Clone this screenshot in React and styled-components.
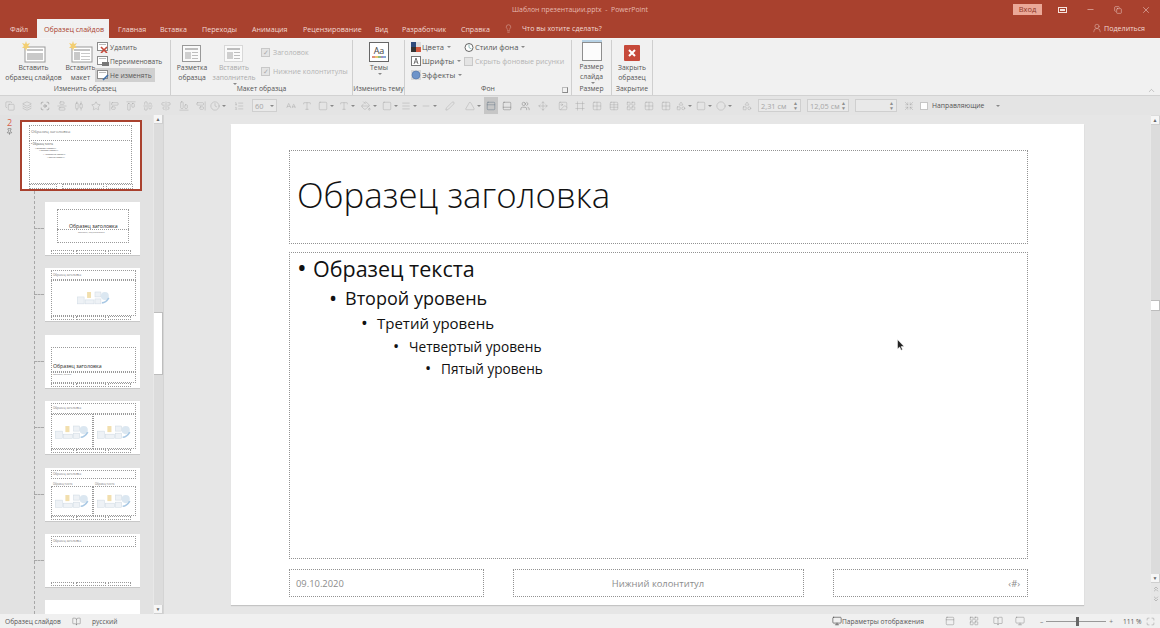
import React from 'react';
import styled, {createGlobalStyle} from 'styled-components';
import {
  Copy, Layers, Focus, AlignVerticalJustifyCenter, AlignHorizontalDistributeCenter, Star, AlignStartVertical,
  AlignStartHorizontal, AlignCenterHorizontal, AlignCenterVertical, AlignEndHorizontal, AlignEndVertical,
  Clock, ListOrdered, ALargeSmall, Type, PaintBucket, Square, Menu, Minus, Pen, Triangle, PanelTop,
  PanelBottom, Users, Move, Image, Frame, Grid2x2, Table, Shapes, Circle, Maximize, LayoutGrid,
  BookOpen, Monitor, Lightbulb, UserRound, Pin, ChevronUp, ChevronsUp, ChevronsDown, X, Shrink
} from 'lucide-react';

const RED = '#a9412e';

const Global = createGlobalStyle`
  html, body { margin: 0; padding: 0; background: #e6e6e6; }
  * { box-sizing: border-box; }
  body { font-family: "Open Sans", "Noto Sans", "Liberation Sans", sans-serif; }
`;

/* ---------- window ---------- */
const Window = styled.div`
  position: relative;
  width: 1160px;
  height: 628px;
  overflow: hidden;
  display: flex;
  flex-direction: column;
  font-size: 8px;
  color: #444;
`;
const TitleBar = styled.div`
  height: 19px;
  background: ${RED};
  display: grid;
  grid-template-columns: 1fr auto 1fr;
  align-items: center;
`;
const DocName = styled.div`
  grid-column: 2;
  color: #e6b9ae;
  font-size: 6.9px;
  white-space: pre;
`;
const WinControls = styled.div`
  grid-column: 3;
  display: flex;
  justify-content: flex-end;
  align-items: center;
`;
const SignIn = styled.div`
  width: 29px;
  height: 11px;
  margin-right: 6px;
  background: #eba898;
  color: #8d3526;
  font-size: 7.5px;
  line-height: 11px;
  text-align: center;
`;
const WinButton = styled.div`
  width: 28px;
  display: flex;
  justify-content: center;
  align-items: center;
  color: #f6e3de;
`;
const TabRow = styled.div`
  height: 19px;
  background: ${RED};
  display: flex;
  align-items: flex-end;
  padding-left: 10px;
  position: relative;
`;
const Tab = styled.div`
  height: 19px;
  line-height: 20px;
  white-space: nowrap;
  font-size: 7.1px;
  color: ${p => p.$active ? RED : '#f1d9d3'};
  background: ${p => p.$active ? '#f1f1f1' : 'transparent'};
  padding: 0 ${p => p.$active ? '7px' : '0'};
  width: ${p => p.$w}px;
  margin-right: ${p => p.$gap}px;
  flex: none;
`;
const TellMe = styled.div`
  display: flex;
  align-items: center;
  gap: 9px;
  height: 19px;
  color: #f1d9d3;
  font-size: 7px;
  white-space: nowrap;
`;
const Share = styled.div`
  position: absolute;
  right: 15px;
  top: 4px;
  display: flex;
  align-items: center;
  gap: 2px;
  color: #f1d9d3;
  font-size: 7.1px;
`;

/* ---------- ribbon ---------- */
const Ribbon = styled.div`
  height: 57px;
  background: #f1f1f1;
  display: flex;
  border-top: 1px solid #f4f4f4;
  position: relative;
`;
const Group = styled.div`
  width: ${p => p.$w}px;
  flex: none;
  display: flex;
  flex-direction: column;
  padding-bottom: 1px;
  margin-top: 1px;
  border-right: 1px solid #cfcfcf;
  position: relative;
`;
const GroupBody = styled.div`
  flex: 1;
  display: flex;
  min-height: 0;
`;
const GroupLabel = styled.div`
  height: 10px;
  line-height: 10px;
  font-size: 6.8px;
  text-align: center;
  color: #555;
  white-space: nowrap;
`;
const Launcher = styled.div`
  position: absolute;
  right: 3px;
  bottom: 2px;
  width: 6px;
  height: 6px;
  border: 1px solid #888;
  border-top-color: #bbb;
  border-left-color: #bbb;
`;
const BigButton = styled.div`
  width: ${p => p.$w}px;
  flex: none;
  display: flex;
  flex-direction: column;
  align-items: center;
  color: ${p => p.$off ? '#aaa' : '#555'};
  font-size: 6.8px;
  line-height: 10px;
  text-align: center;
  white-space: nowrap;
`;
const BigIcon = styled.div`
  height: 23px;
  padding-top: ${p => p.$top || 0}px;
  display: flex;
  align-items: flex-start;
  justify-content: center;
`;
const SmallStack = styled.div`
  display: flex;
  flex-direction: column;
  gap: ${p => p.$gap || 0}px;
  width: ${p => p.$w ? p.$w + 'px' : 'auto'};
  margin-left: ${p => p.$left || 0}px;
  padding-top: ${p => p.$top || 0}px;
`;
const SmallButton = styled.div`
  height: 14px;
  display: flex;
  align-items: center;
  gap: ${p => p.$gap ?? 2}px;
  padding: 0 3px 0 2px;
  white-space: nowrap;
  font-size: ${p => p.$s || 7.6}px;
  color: ${p => p.$off ? '#b4b4b4' : '#555'};
  background: ${p => p.$on ? '#d0d0d0' : 'transparent'};
  align-self: flex-start;
`;
const FadedCheck = styled.span`
  width: 9px;
  height: 9px;
  flex: none;
  margin-right: 1px;
  border: 1px solid #c8c8c8;
  background: #e4e4e4;
  color: #aaa;
  font-size: 7px;
  line-height: 7px;
  text-align: center;
`;
const Caret = styled.span`
  display: inline-block;
  margin-left: 2px;
  border-left: 2px solid transparent;
  border-right: 2px solid transparent;
  border-top: 2px solid #888;
  vertical-align: middle;
`;
const Collapse = styled.div`
  position: absolute;
  right: 4px;
  bottom: 0;
  color: #777;
  display: flex;
`;

/* ---------- quick toolbar ---------- */
const Toolbar = styled.div`
  height: 20px;
  background: #e4e4e4;
  border-top: 1px solid #d2d2d2;
  display: flex;
  align-items: center;
  padding-left: 1px;
  color: #9c9c9c;
`;
const Slot = styled.div`
  width: ${p => p.$w}px;
  height: 17px;
  flex: none;
  display: flex;
  align-items: center;
  justify-content: center;
  background: ${p => p.$on ? '#c6c6c6' : 'transparent'};
  color: ${p => p.$on ? '#5d6f80' : p.$dark ? '#6d6d6d' : '#a2a2a2'};
`;
const SpinBox = styled.div`
  width: ${p => p.$w}px;
  height: 13px;
  flex: none;
  margin-right: ${p => p.$gap}px;
  border: 1px solid #cfcfcf;
  background: #e9e9e9;
  display: flex;
  align-items: center;
  justify-content: space-between;
  padding: 0 2px;
  font-size: 7.4px;
  color: #a6a6a6;
`;
const Arrows = styled.span`
  font-size: 5px;
  line-height: 5px;
  text-align: center;
  color: #8e8e8e;
`;
const GuideCheck = styled.span`
  width: 8px;
  height: 8px;
  flex: none;
  background: #fff;
  border: 1px solid #c6c6c6;
  margin: 0 4px 0 2px;
`;
const GuideLabel = styled.span`
  color: #555;
  font-size: 6.8px;
  width: 58px;
  flex: none;
  white-space: nowrap;
`;

/* ---------- main ---------- */
const Main = styled.div`
  flex: 1;
  min-height: 0;
  display: flex;
  background: #e6e6e6;
`;
const Sidebar = styled.div`
  width: 164px;
  flex: none;
  display: flex;
  background: #e2e2e2;
  border-right: 1px solid #d4d4d4;
`;
const ThumbList = styled.div`
  position: relative;
  width: 153px;
  flex: none;
  overflow: hidden;
  padding: 5px 0 0 45px;
  display: flex;
  flex-direction: column;
  &::before {
    content: "";
    position: absolute;
    left: 34px;
    top: 76px;
    bottom: 0;
    border-left: 1px dashed #a8a8a8;
  }
`;
const SlideMark = styled.div`
  position: absolute;
  left: 5px;
  top: 3px;
  width: 9px;
  color: #d9604a;
  font-size: 9px;
  line-height: 10px;
  display: flex;
  flex-direction: column;
  align-items: center;
`;
const MasterThumb = styled.div`
  position: relative;
  width: 122px;
  height: 71px;
  margin: 0 0 11px -25px;
  border: 2px solid ${RED};
  background: #fff;
  flex: none;
`;
const Thumb = styled.div`
  position: relative;
  width: 95px;
  height: 53px;
  flex: none;
  margin-bottom: 13.4px;
  background: #fff;
  box-shadow: 0 1px 0 #c8c8c8;
  &::before {
    content: "";
    position: absolute;
    left: -11px;
    top: 26px;
    width: 10px;
    border-top: 1px dashed #a8a8a8;
  }
`;
const Ph = styled.div`
  position: absolute;
  left: ${p => p.$x}px;
  top: ${p => p.$y}px;
  width: ${p => p.$w}px;
  height: ${p => p.$h}px;
  border: 1px dotted #9a9a9a;
`;
const MiniText = styled.div`
  position: absolute;
  left: ${p => p.$x}px;
  top: ${p => p.$y}px;
  font-size: ${p => p.$s}px;
  line-height: 1;
  white-space: nowrap;
  color: ${p => p.$c || '#777'};
`;
const MiniPic = styled.svg`
  position: absolute;
  left: ${p => p.$x}px;
  top: ${p => p.$y}px;
`;
const Scroll = styled.div`
  width: 10px;
  flex: none;
  background: #dcdcdc;
  display: flex;
  flex-direction: column;
  border-left: 1px solid #e8e8e8;
`;
const ScrollButton = styled.div`
  height: 9px;
  flex: none;
  background: #f6f6f6;
  border: 1px solid #cfcfcf;
  border-width: 0 1px 1px 0;
  color: #666;
  font-size: 5px;
  line-height: 8px;
  text-align: center;
`;
const ScrollSpace = styled.div`
  height: ${p => p.$h}px;
  flex: ${p => p.$h ? 'none' : 1};
`;
const ScrollThumb = styled.div`
  height: ${p => p.$h}px;
  flex: none;
  background: #fff;
  border: 1px solid #bdbdbd;
  border-width: 1px 1px 1px 0;
`;
const PageArrows = styled.div`
  height: 31px;
  flex: none;
  display: flex;
  flex-direction: column;
  align-items: center;
  gap: 2px;
  padding-top: 2px;
  color: #777;
  background: #e6e6e6;
`;
const Canvas = styled.div`
  flex: 1;
  min-width: 0;
  padding: 9px 0 0 67px;
`;
const Slide = styled.div`
  width: 853px;
  height: 481px;
  background: #fff;
  box-shadow: 0 1px 1px #c4c4c4, -1px 0 0 #ececec;
  padding: 26px 56px 8px 58px;
  display: flex;
  flex-direction: column;
`;
const Placeholder = styled.div`
  border: 1px dotted #929292;
`;
const TitleBox = styled(Placeholder)`
  height: 94px;
  display: flex;
  align-items: center;
  padding: 0 0 6px 7px;
  font-size: 34.8px;
  font-weight: 300;
  color: #111;
  white-space: nowrap;
`;
const BodyBox = styled(Placeholder)`
  height: 307px;
  margin-top: 8px;
  padding: 0 0 0 7px;
`;
const Level = styled.div`
  display: flex;
  align-items: center;
  height: ${p => p.$h}px;
  padding-left: ${p => p.$n * 32}px;
  font-size: ${p => p.$s}px;
  color: #111;
  white-space: nowrap;
  &::before {
    content: "•";
    width: 16px;
    flex: none;
    font-size: 1.2em;
    line-height: 1;
  }
`;
const FooterRow = styled.div`
  display: grid;
  grid-template-columns: 195px 291px 195px;
  column-gap: 29px;
  margin-top: 10px;
`;
const FooterBox = styled(Placeholder)`
  height: 28px;
  display: flex;
  align-items: center;
  justify-content: ${p => p.$align};
  padding: 0 7px 0 6px;
  font-size: 9.4px;
  color: #8c8c8c;
`;
const Cursor = styled.svg`
  position: absolute;
  left: 897px;
  top: 339px;
`;

/* ---------- status ---------- */
const StatusBar = styled.div`
  height: 14px;
  background: #f0f0f0;
  display: flex;
  align-items: center;
  padding-left: 5px;
  font-size: 6.6px;
  color: #555;
  white-space: nowrap;
`;
const StatusItem = styled.div`
  display: flex;
  align-items: center;
  width: ${p => p.$w}px;
  flex: none;
  color: ${p => p.$c || '#555'};
`;
const Zoomer = styled.div`
  width: 60px;
  height: 1px;
  flex: none;
  background: #999;
  position: relative;
  margin: 0 3px;
  &::after {
    content: "";
    position: absolute;
    left: 30px;
    top: -4px;
    width: 3px;
    height: 9px;
    background: #666;
  }
`;

/* ---------- drawings ---------- */
const NewSlideIcon = ({side}) => (
  <svg width="27" height="23" viewBox="0 0 27 23">
    <rect x="5" y="6" width="20" height="15" fill="#fff" stroke="#999" />
    <rect x="7" y="8" width="16" height="2" fill="#c4c4c4" />
    {side
      ? <g fill="#c9c9c9"><rect x="7" y="11" width="6" height="8" /><rect x="14" y="12" width="9" height="1" /><rect x="14" y="15" width="9" height="1" /><rect x="14" y="18" width="9" height="1" /></g>
      : <rect x="7" y="12" width="16" height="7" fill="#c9c9c9" />}
    <path d="M6 0l1 3 3-1-2 3 2 2-3 0-1 3-1-3-3 0 2-2-2-3 3 1z" fill="#f3cf72" />
  </svg>
);
const SmallSlide = ({children}) => (
  <svg width="12" height="12" viewBox="0 0 12 12">
    <rect x="0.5" y="1.5" width="10" height="8" fill="#fff" stroke="#8a8a8a" />
    <rect x="2" y="3" width="7" height="1" fill="#bbb" />
    {children}
  </svg>
);
const LayoutIcon = ({off}) => (
  <svg width="22" height="20" viewBox="0 0 22 20">
    <rect x="1.5" y="1.5" width="18" height="16" fill="#fafafa" stroke={off ? '#bbb' : '#999'} strokeDasharray={off ? '1 1' : undefined} />
    <rect x="4" y="4" width="13" height="2" fill="#bdbdbd" />
    <rect x="4" y="8" width="6" height="7" fill="#cfcfcf" />
    <rect x="11" y="8" width="6" height="1" fill="#bdbdbd" />
    <rect x="11" y="11" width="6" height="1" fill="#bdbdbd" />
    <rect x="11" y="14" width="6" height="1" fill="#bdbdbd" />
  </svg>
);
const ThemeIcon = () => (
  <svg width="20" height="20" viewBox="0 0 20 20">
    <rect x="0.5" y="0.5" width="19" height="19" fill="#fff" stroke="#666" />
    <text x="10" y="12" fontSize="9" textAnchor="middle" fill="#444" fontFamily="Open Sans">Aa</text>
    <path d="M3 15h3" stroke="#d26a4f" strokeWidth="1.5" />
    <path d="M6 15h3" stroke="#e3b23c" strokeWidth="1.5" />
    <path d="M9 15h3" stroke="#6aa84f" strokeWidth="1.5" />
    <path d="M12 15h2" stroke="#8e63a8" strokeWidth="1.5" />
    <path d="M14 15h3" stroke="#5b8fc7" strokeWidth="1.5" />
  </svg>
);
const ColorsIcon = () => (
  <svg width="10" height="10" viewBox="0 0 10 10">
    <rect width="5" height="5" fill="#2f4b7c" />
    <rect x="5" width="5" height="5" fill="#ddd" />
    <rect y="5" width="5" height="5" fill="#333" />
    <rect x="5" y="5" width="5" height="5" fill="#d2583f" />
  </svg>
);
const FontsIcon = () => (
  <svg width="10" height="10" viewBox="0 0 10 10">
    <rect x="0.5" y="0.5" width="9" height="9" fill="#fff" stroke="#777" />
    <path d="M3 8l2-6 2 6M3.7 6h2.6" fill="none" stroke="#555" strokeWidth=".8" />
  </svg>
);
const EffectsIcon = () => (
  <svg width="10" height="10" viewBox="0 0 10 10">
    <rect width="10" height="10" fill="#d8d8d8" />
    <circle cx="5" cy="5" r="4" fill="#6e94c9" stroke="#4b6ea3" strokeWidth=".6" />
  </svg>
);
const BgStyleIcon = () => (
  <svg width="10" height="10" viewBox="0 0 10 10">
    <circle cx="5" cy="5.5" r="4" fill="#fff" stroke="#666" />
    <path d="M5 5.5V2.5M5 5.5l2.5 1.5" stroke="#7aa" strokeWidth=".8" />
  </svg>
);
const SlideSizeIcon = () => (
  <svg width="22" height="22" viewBox="0 0 22 22">
    <path d="M1 1h20" stroke="#7fb3d9" strokeWidth="1" />
    <rect x="1.5" y="2.5" width="19" height="18" fill="#fcfcfc" stroke="#8e8e8e" />
  </svg>
);
const CloseIcon = () => (
  <svg width="16" height="16" viewBox="0 0 16 16">
    <rect width="16" height="16" rx="1" fill="#c6493a" />
    <path d="M5 5l6 6M11 5l-6 6" stroke="#fff" strokeWidth="2" />
  </svg>
);
const RibbonModeIcon = () => (
  <svg width="9" height="6" viewBox="0 0 9 6">
    <rect x="0.5" y="0.5" width="8" height="5" fill="none" stroke="currentColor" />
    <rect x="2" y="2" width="5" height="2" fill="currentColor" />
  </svg>
);
const ThumbPicture = ({x, y, w}) => (
  <MiniPic $x={x} $y={y} width={w} height={w * 0.42} viewBox="0 0 33 14">
    <g fill="#eef2f6" stroke="#cdd8e2" strokeWidth=".5">
      <rect x="0" y="6" width="7" height="7" />
      <rect x="8" y="9" width="9" height="4" />
      <rect x="18" y="1" width="6" height="5" />
      <rect x="18" y="8" width="6" height="5" />
    </g>
    <rect x="10" y="1" width="4" height="6" fill="#f2dfae" />
    <circle cx="28" cy="5" r="4" fill="#dbe7f1" />
    <path d="M25 12q4 0 7-5" stroke="#a8c8e4" strokeWidth="1.6" fill="none" />
  </MiniPic>
);

/* ---------- data ---------- */
const tabs = [
  ['Образец слайдов', 72, 9, true], ['Главная', 26, 16], ['Вставка', 26, 16], ['Переходы', 34, 16],
  ['Анимация', 36, 15], ['Рецензирование', 55, 17], ['Вид', 12, 15], ['Разработчик', 43, 16], ['Справка', 28, 15],
];
const tools = [
  [Copy, 17], [Layers, 18], [Focus, 18, 'dark'], [AlignVerticalJustifyCenter, 16], [AlignHorizontalDistributeCenter, 17],
  [Star, 18], [AlignStartVertical, 17], [AlignStartHorizontal, 17], [AlignCenterHorizontal, 17], [AlignCenterVertical, 20],
  [AlignEndHorizontal, 16], [AlignEndVertical, 17], [Clock, 17, 'drop'], [ListOrdered, 26],
];
const tools2 = [
  [ALargeSmall, 15], [Type, 18], [Square, 20, 'drop'], [Type, 22, 'drop'], [PaintBucket, 21, 'drop'], [Square, 21, 'drop'],
  [Menu, 18, 'drop'], [Minus, 21, 'drop'], [Pen, 22], [Triangle, 23, 'drop'], [PanelTop, 14, 'on'], [PanelBottom, 18, 'dark'],
  [Users, 17, 'dark'], [Move, 20], [Image, 19], [Frame, 16], [Grid2x2, 17], [Table, 17], [LayoutGrid, 18], [Grid2x2, 17],
  [Grid2x2, 17], [Shapes, 20, 'drop'], [Square, 19, 'drop'], [Circle, 22, 'drop'], [Shapes, 23],
];
const T = 'Образец заголовка';
const footers = [[6, 48, 23, 4], [31, 48, 30, 4], [63, 48, 23, 4]];
const thumbs = [
  {boxes: [[12, 7, 72, 34], [12, 27, 72, 14], ...footers], texts: [[24, 22, 5.2, T, '#222'], [33, 29, 2.4, 'Образец подзаголовка']]},
  {boxes: [[6, 2, 85, 10], [6, 12, 85, 36], ...footers], texts: [[8, 6, 3, T]], pics: [[32, 23, 33]]},
  {boxes: [[6, 12, 85, 25], [6, 37, 85, 11], ...footers], texts: [[8, 29, 5.2, T, '#222'], [8, 38, 2.4, 'Образец текста']]},
  {boxes: [[6, 2, 85, 11], [6, 13, 42, 35], [48, 13, 43, 35], ...footers], texts: [[8, 6, 3, T]], pics: [[10, 24, 34], [52, 24, 34]]},
  {boxes: [[6, 2, 85, 9], [6, 18, 42, 30], [48, 18, 43, 30], ...footers], texts: [[8, 5, 3, T], [8, 15, 2.6, 'Образец текста'], [50, 15, 2.6, 'Образец текста']], pics: [[10, 26, 34], [52, 26, 34]]},
  {boxes: [[6, 2, 85, 11], ...footers], texts: [[8, 6, 3, T]]},
  {boxes: [], texts: []},
];
const levels = [
  ['Образец текста', 21.5, 30], ['Второй уровень', 18, 29], ['Третий уровень', 15, 22],
  ['Четвертый уровень', 13.7, 24], ['Пятый уровень', 13.6, 20],
];

function MiniSlide({data}) {
  return (
    <Thumb>
      {data.boxes.map((b, i) => <Ph key={i} $x={b[0]} $y={b[1]} $w={b[2]} $h={b[3]} />)}
      {data.texts.map((t, i) => <MiniText key={i} $x={t[0]} $y={t[1]} $s={t[2]} $c={t[4]}>{t[3]}</MiniText>)}
      {(data.pics || []).map((p, i) => <ThumbPicture key={i} x={p[0]} y={p[1]} w={p[2]} />)}
    </Thumb>
  );
}

function ToolIcons({items}) {
  return items.map(([Icon, w, kind], i) => (
    <Slot key={i} $w={w} $on={kind === 'on'} $dark={kind === 'dark'}>
      <Icon size={10} strokeWidth={1} />
      {kind === 'drop' && <Caret />}
    </Slot>
  ));
}

export default function App() {
  return (
    <Window>
      <Global />
      <TitleBar>
        <DocName>{'Шаблон презентации.pptx  -  PowerPoint'}</DocName>
        <WinControls>
          <SignIn>Вход</SignIn>
          <WinButton><RibbonModeIcon /></WinButton>
          <WinButton><Minus size={9} strokeWidth={1.4} /></WinButton>
          <WinButton><Copy size={8} strokeWidth={1.4} /></WinButton>
          <WinButton><X size={10} strokeWidth={1.2} /></WinButton>
        </WinControls>
      </TitleBar>
      <TabRow>
        <Tab $w={16} $gap={11}>Файл</Tab>
        {tabs.map(t => <Tab key={t[0]} $w={t[1]} $gap={t[2]} $active={t[3]}>{t[0]}</Tab>)}
        <TellMe>
          <Lightbulb size={9} strokeWidth={1} />
          Что вы хотите сделать?
        </TellMe>
        <Share><UserRound size={10} strokeWidth={1} />Поделиться</Share>
      </TabRow>

      <Ribbon>
        <Group $w={171}>
          <GroupBody>
            <BigButton $w={67}><BigIcon $top={1}><NewSlideIcon /></BigIcon>Вставить<br />образец слайдов</BigButton>
            <BigButton $w={27}><BigIcon $top={1}><NewSlideIcon side /></BigIcon>Вставить<br />макет</BigButton>
            <SmallStack $left={1}>
              <SmallButton $s={6.7} $gap={1}><SmallSlide><path d="M4 6l6 6M10 6l-6 6" stroke="#c6493a" strokeWidth="1.6" /></SmallSlide>Удалить</SmallButton>
              <SmallButton $s={6.7} $gap={1}><SmallSlide><rect x="5" y="7" width="7" height="4" fill="#777" /></SmallSlide>Переименовать</SmallButton>
              <SmallButton $s={6.7} $gap={1} $on><SmallSlide><path d="M6 11l5-5" stroke="#3f6fa8" strokeWidth="1.6" /></SmallSlide>Не изменять</SmallButton>
            </SmallStack>
          </GroupBody>
          <GroupLabel>Изменить образец</GroupLabel>
        </Group>
        <Group $w={182}>
          <GroupBody>
            <BigButton $w={42}><BigIcon $top={4}><LayoutIcon /></BigIcon>Разметка<br />образца</BigButton>
            <BigButton $w={42} $off><BigIcon $top={4}><LayoutIcon off /></BigIcon>Вставить<br />заполнитель<Caret /></BigButton>
            <SmallStack $top={5} $left={4} $gap={5}>
              <SmallButton $s={7.1} $off><FadedCheck>✓</FadedCheck>Заголовок</SmallButton>
              <SmallButton $s={7.1} $off><FadedCheck>✓</FadedCheck>Нижние колонтитулы</SmallButton>
            </SmallStack>
          </GroupBody>
          <GroupLabel>Макет образца</GroupLabel>
        </Group>
        <Group $w={52}>
          <GroupBody>
            <BigButton $w={52}><BigIcon $top={2}><ThemeIcon /></BigIcon>Темы<br /><Caret /></BigButton>
          </GroupBody>
          <GroupLabel>Изменить тему</GroupLabel>
        </Group>
        <Group $w={167}>
          <GroupBody>
            <SmallStack $w={53} $left={4}>
              <SmallButton $gap={1}><ColorsIcon />Цвета<Caret /></SmallButton>
              <SmallButton $gap={1}><FontsIcon />Шрифты<Caret /></SmallButton>
              <SmallButton $gap={1}><EffectsIcon />Эффекты<Caret /></SmallButton>
            </SmallStack>
            <SmallStack>
              <SmallButton $gap={1}><BgStyleIcon />Стили фона<Caret /></SmallButton>
              <SmallButton $s={7.1} $off $gap={1}><FadedCheck />Скрыть фоновые рисунки</SmallButton>
            </SmallStack>
          </GroupBody>
          <GroupLabel>Фон</GroupLabel>
          <Launcher />
        </Group>
        <Group $w={40}>
          <GroupBody>
            <BigButton $w={39}><BigIcon><SlideSizeIcon /></BigIcon>Размер<br />слайда<Caret /></BigButton>
          </GroupBody>
          <GroupLabel>Размер</GroupLabel>
        </Group>
        <Group $w={41}>
          <GroupBody>
            <BigButton $w={40}><BigIcon $top={5}><CloseIcon /></BigIcon>Закрыть<br />образец</BigButton>
          </GroupBody>
          <GroupLabel>Закрытие</GroupLabel>
        </Group>
        <Collapse><ChevronUp size={9} strokeWidth={1} /></Collapse>
      </Ribbon>

      <Toolbar>
        <ToolIcons items={tools} />
        <SpinBox $w={25} $gap={6}>60<Caret /></SpinBox>
        <ToolIcons items={tools2} />
        <SpinBox $w={43} $gap={6}>2,31 см<Arrows>▲<br />▼</Arrows></SpinBox>
        <SpinBox $w={42} $gap={6}>12,05 см<Arrows>▲<br />▼</Arrows></SpinBox>
        <SpinBox $w={42} $gap={3}><span /><Arrows>▲<br />▼</Arrows></SpinBox>
        <Slot $w={18}><Shrink size={10} strokeWidth={1} /></Slot>
        <GuideCheck />
        <GuideLabel>Направляющие</GuideLabel>
        <Slot $w={13} $dark><Caret /></Slot>
      </Toolbar>

      <Main>
        <Sidebar>
          <ThumbList>
            <SlideMark>2<Pin size={7} strokeWidth={1.5} color="#444" /></SlideMark>
            <MasterThumb>
              <Ph $x={7} $y={3} $w={103} $h={16} />
              <Ph $x={7} $y={18} $w={103} $h={44} />
              <Ph $x={7} $y={62} $w={28} $h={5} />
              <Ph $x={40} $y={62} $w={42} $h={5} />
              <Ph $x={84} $y={62} $w={27} $h={5} />
              <MiniText $x={9} $y={8} $s={4.2}>{T}</MiniText>
              <MiniText $x={9} $y={21} $s={2.7} $c="#444">• Образец текста</MiniText>
              <MiniText $x={13} $y={24.5} $s={2.5} $c="#444">• Второй уровень</MiniText>
              <MiniText $x={17} $y={28} $s={2.3} $c="#444">• Третий уровень</MiniText>
              <MiniText $x={21} $y={31.5} $s={2.2} $c="#444">• Четвертый уровень</MiniText>
              <MiniText $x={25} $y={35} $s={2.2} $c="#444">• Пятый уровень</MiniText>
            </MasterThumb>
            {thumbs.map((t, i) => <MiniSlide key={i} data={t} />)}
          </ThumbList>
          <Scroll>
            <ScrollButton>▲</ScrollButton>
            <ScrollSpace $h={188} />
            <ScrollThumb $h={63} />
            <ScrollSpace />
            <ScrollButton>▼</ScrollButton>
          </Scroll>
        </Sidebar>
        <Canvas>
          <Slide>
            <TitleBox>{T}</TitleBox>
            <BodyBox>
              {levels.map((l, i) => <Level key={l[0]} $n={i} $s={l[1]} $h={l[2]}>{l[0]}</Level>)}
            </BodyBox>
            <FooterRow>
              <FooterBox $align="flex-start">09.10.2020</FooterBox>
              <FooterBox $align="center">Нижний колонтитул</FooterBox>
              <FooterBox $align="flex-end">‹#›</FooterBox>
            </FooterRow>
          </Slide>
        </Canvas>
        <Scroll>
          <ScrollSpace $h={1} />
          <ScrollButton>▲</ScrollButton>
          <ScrollSpace $h={175} />
          <ScrollThumb $h={11} />
          <ScrollSpace />
          <ScrollButton>▼</ScrollButton>
          <PageArrows><ChevronsUp size={8} strokeWidth={1.2} /><ChevronsDown size={8} strokeWidth={1.2} /></PageArrows>
        </Scroll>
      </Main>

      <StatusBar>
        <StatusItem $w={67}>Образец слайдов</StatusItem>
        <StatusItem $w={20}><BookOpen size={9} strokeWidth={1} /></StatusItem>
        <StatusItem $w={740}>русский</StatusItem>
        <StatusItem $w={113}><Monitor size={10} strokeWidth={1.5} color="#444" />Параметры отображения</StatusItem>
        <StatusItem $w={24} $c="#777"><PanelTop size={10} strokeWidth={1} /></StatusItem>
        <StatusItem $w={24} $c="#777"><LayoutGrid size={10} strokeWidth={1} /></StatusItem>
        <StatusItem $w={22} $c="#777"><BookOpen size={10} strokeWidth={1} /></StatusItem>
        <StatusItem $w={25} $c="#777"><Monitor size={10} strokeWidth={1} /></StatusItem>
        <StatusItem $w={83} $c="#777">–<Zoomer />+</StatusItem>
        <StatusItem $w={23}>111 %</StatusItem>
        <StatusItem $w={10} $c="#777"><Maximize size={9} strokeWidth={1} /></StatusItem>
      </StatusBar>

      <Cursor width="8" height="12" viewBox="0 0 8 12">
        <path d="M0.5 0.5v9.5l2.2-2 1.4 3.2 1.4-.6-1.4-3.1h3z" fill="#222" stroke="#fff" strokeWidth=".5" />
      </Cursor>
    </Window>
  );
}
